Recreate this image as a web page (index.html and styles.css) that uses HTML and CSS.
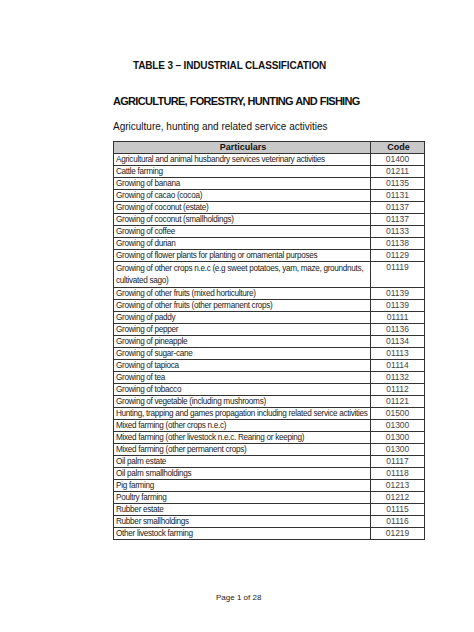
FILE: index.html
```html
<!DOCTYPE html>
<html>
<head>
<meta charset="utf-8">
<link rel="stylesheet" href="styles.css">
</head>
<body>
<div class="page">
  <h1 class="title">TABLE 3 – INDUSTRIAL CLASSIFICATION</h1>
  <h2 class="section">AGRICULTURE, FORESTRY, HUNTING AND FISHING</h2>
  <h3 class="sub">Agriculture, hunting and related service activities</h3>
  <table class="grid">
    <colgroup><col class="col-part"><col class="col-code"></colgroup>
    <thead>
      <tr><th>Particulars</th><th>Code</th></tr>
    </thead>
    <tbody>
      <tr><td>Agricultural and animal husbandry services veterinary activities</td><td class="c">01400</td></tr>
      <tr><td>Cattle farming</td><td class="c">01211</td></tr>
      <tr><td>Growing of banana</td><td class="c">01135</td></tr>
      <tr><td>Growing of cacao (cocoa)</td><td class="c">01131</td></tr>
      <tr><td>Growing of coconut (estate)</td><td class="c">01137</td></tr>
      <tr><td>Growing of coconut (smallholdings)</td><td class="c">01137</td></tr>
      <tr><td>Growing of coffee</td><td class="c">01133</td></tr>
      <tr><td>Growing of durian</td><td class="c">01138</td></tr>
      <tr><td>Growing of flower plants for planting or ornamental purposes</td><td class="c">01129</td></tr>
      <tr><td class="two">Growing of other crops n.e.c (e.g sweet potatoes, yam, maze, groundnuts,<br>cultivated sago)</td><td class="c top">01119</td></tr>
      <tr><td>Growing of other fruits (mixed horticulture)</td><td class="c">01139</td></tr>
      <tr><td>Growing of other fruits (other permanent crops)</td><td class="c">01139</td></tr>
      <tr><td>Growing of paddy</td><td class="c">01111</td></tr>
      <tr><td>Growing of pepper</td><td class="c">01136</td></tr>
      <tr><td>Growing of pineapple</td><td class="c">01134</td></tr>
      <tr><td>Growing of sugar-cane</td><td class="c">01113</td></tr>
      <tr><td>Growing of tapioca</td><td class="c">01114</td></tr>
      <tr><td>Growing of tea</td><td class="c">01132</td></tr>
      <tr><td>Growing of tobacco</td><td class="c">01112</td></tr>
      <tr><td>Growing of vegetable (including mushrooms)</td><td class="c">01121</td></tr>
      <tr><td>Hunting, trapping and games propagation including related service activities</td><td class="c">01500</td></tr>
      <tr><td>Mixed farming (other crops n.e.c)</td><td class="c">01300</td></tr>
      <tr><td>Mixed farming (other livestock n.e.c. Rearing or keeping)</td><td class="c">01300</td></tr>
      <tr><td>Mixed farming (other permanent crops)</td><td class="c">01300</td></tr>
      <tr><td>Oil palm estate</td><td class="c">01117</td></tr>
      <tr><td>Oil palm smallholdings</td><td class="c">01118</td></tr>
      <tr><td>Pig farming</td><td class="c">01213</td></tr>
      <tr><td>Poultry farming</td><td class="c">01212</td></tr>
      <tr><td>Rubber estate</td><td class="c">01115</td></tr>
      <tr><td>Rubber smallholdings</td><td class="c">01116</td></tr>
      <tr><td>Other livestock farming</td><td class="c">01219</td></tr>
    </tbody>
  </table>
  <div class="footer">Page 1 of 28</div>
</div>
</body>
</html>
```

FILE: styles.css
```css
html, body {
  margin: 0;
  padding: 0;
  background: #ffffff;
}
.page {
  width: 474px;
  height: 632px;
  box-sizing: border-box;
  padding: 59px 51px 0 113px;
  font-family: "Liberation Sans", Arial, sans-serif;
  color: #111;
  display: flex;
  flex-direction: column;
}
.title {
  margin: 0 0 0 20px;
  font-size: 10px;
  line-height: 13px;
  font-weight: bold;
  letter-spacing: -0.15px;
  white-space: nowrap;
}
.section {
  margin: 22px 0 0 0;
  font-size: 11px;
  line-height: 14px;
  font-weight: bold;
  letter-spacing: -0.7px;
  word-spacing: 0.5px;
  white-space: nowrap;
}
.sub {
  margin: 12px 0 0 0;
  font-size: 10px;
  line-height: 13px;
  font-weight: normal;
  letter-spacing: 0;
  white-space: nowrap;
}
.grid {
  margin-top: 8px;
  width: 311px;
  table-layout: fixed;
  border-collapse: collapse;
  font-size: 8.2px;
  letter-spacing: -0.3px;
  border: 1px solid #333;
}
.col-part {
  width: 257px;
}
.col-code {
  width: 54px;
}
.grid th, .grid td {
  border: 1px solid #333;
  padding: 0 0 0 2px;
  height: 11px;
  line-height: 11px;
  vertical-align: middle;
  text-align: left;
  color: #222;
  white-space: nowrap;
}
.grid td.two {
  line-height: 11.5px;
  padding-top: 1px;
  padding-bottom: 1px;
}
.grid th {
  background: #c8c8c8;
  font-weight: bold;
  text-align: center;
  font-size: 9px;
  letter-spacing: 0;
  color: #111;
}
.grid .c {
  text-align: center;
  color: #444;
  letter-spacing: 0;
  font-size: 8.5px;
  padding: 0;
}
.grid .top {
  vertical-align: top;
}
.footer {
  margin-top: auto;
  margin-bottom: 30px;
  align-self: flex-start;
  margin-left: 103px;
  font-size: 8px;
  color: #222;
}
```
